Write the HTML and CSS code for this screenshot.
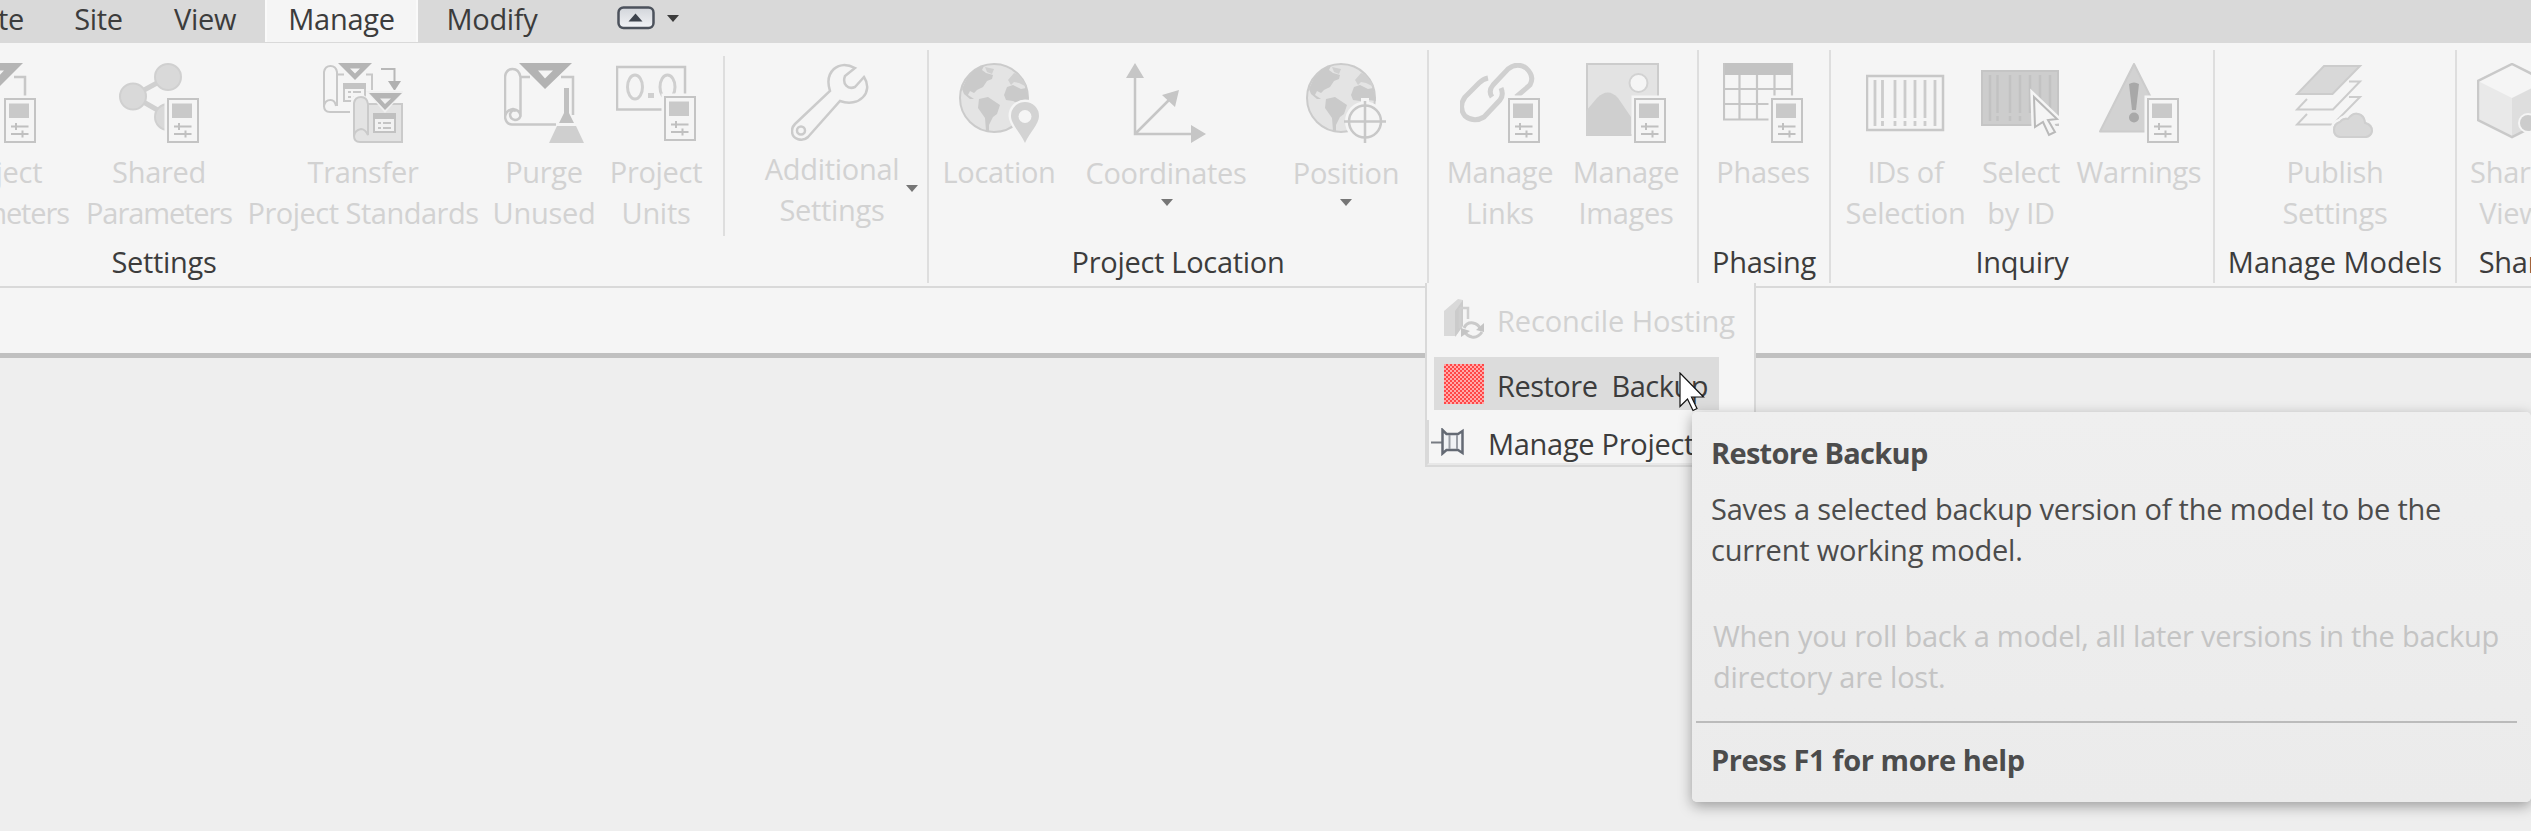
FILE: index.html
```html
<!DOCTYPE html>
<html lang="en">
<head>
    <meta charset="UTF-8">
    <meta name="viewport" content="width=device-width, initial-scale=1.0">
    <title>Manage</title>
    <link rel="stylesheet" href="styles.css">
</head>
<body>
    <!-- shared icon parts -->
    <svg class="defs">
        <symbol id="sheet" viewBox="0 0 80 80">
            <rect x="45.5" y="32.5" width="36" height="49" fill="#f5f5f5"/>
            <rect x="49" y="36" width="30" height="43" fill="#f5f5f5" stroke="#c4c4c4" stroke-width="2"/>
            <rect x="53" y="40.500" width="20" height="14.500" fill="#c9c9c9"/>
            <path d="M55 63.500H72.500M60 60V67M55 71H72.500M66.500 67.500V74.500" stroke="#c0c0c0" stroke-width="2" fill="none"/>
        </symbol>
        <symbol id="globe" viewBox="0 0 80 80">
            <circle cx="35" cy="35" r="34" fill="#e4e4e4" stroke="#cbcbcb" stroke-width="2"/>
            <path d="M3 26L8 15 17 6 25 3 23 7 27 10 34 12 33 16 28 18 24 24 18 27 15 30 11 28 9 32 15 36 11 36 5 31Z" fill="#cacaca"/>
            <path d="M26 4L35 6 33 11 28 9Z" fill="#d0d0d0"/>
            <path d="M20 36L29 34 35 38 41 42 38 51 34 54 30 62 30 69 27 68 26 55 19 45Z" fill="#cacaca"/>
            <path d="M48 24L54 22 62 26 67 25 70 38 62 37 60 41 54 38 47 37 45 32Z" fill="#cacaca"/>
            <path d="M49 17L55 10 59 11 66 20 68 24 60 20 55 19 52 22Z" fill="#d0d0d0"/>
        </symbol>
    </svg>

    <div class="tabs">
        <a class="tab tab-cut">te</a>
        <a class="tab tab-site">Site</a>
        <a class="tab tab-view">View</a>
        <a class="tab tab-manage on">Manage</a>
        <a class="tab tab-modify">Modify</a>
        <svg class="minimize" width="38" height="24" viewBox="0 0 38 24">
            <defs><linearGradient id="mg" x1="0" y1="0" x2="0" y2="1"><stop offset="0" stop-color="#d2d5da"/><stop offset="1" stop-color="#f2f4f7"/></linearGradient></defs>
            <rect x="1.500" y="1.500" width="35" height="20.500" rx="5" fill="url(#mg)" stroke="#4c525c" stroke-width="2.500"/>
            <path d="M18.500 7.500L25.500 15.500H11.500Z" fill="#3d434d"/>
        </svg>
        <i class="arrow arrow-dark"></i>
    </div>

    <div class="ribbon">
        <div class="panel panel-settings">
            <div class="buttons">
                <div class="btn btn-project">
                    <svg class="icon" viewBox="0 0 80 80">
                        <path d="M58 14H69V34M17 14H24M44 61.500H5" fill="none" stroke="#c8c8c8" stroke-width="2.500"/>
                        <path d="M14 0H67L41 26ZM34 7.500H48L41 15Z" fill="#b5b5b5" fill-rule="evenodd"/>
                        <use href="#sheet"/>
                    </svg>
                    <span>Project</span><span class="tight">Parameters</span>
                </div>
                <div class="btn btn-shared">
                    <svg class="icon" viewBox="0 0 80 80">
                        <path d="M49 14L14 33 49 53" fill="none" stroke="#d0d0d0" stroke-width="5"/>
                        <g fill="#d9d9d9" stroke="#d0d0d0" stroke-width="2"><circle cx="49" cy="14" r="13"/><circle cx="14" cy="33.500" r="13"/><circle cx="49" cy="54" r="13"/></g>
                        <use href="#sheet"/>
                    </svg>
                    <span>Shared</span><span class="tight">Parameters</span>
                </div>
                <div class="btn btn-transfer">
                    <svg class="icon" viewBox="0 0 80 80">
                        <g fill="none" stroke="#c8c8c8" stroke-width="2">
                            <path d="M1 44V9Q2 3 7.500 3Q13 3 14 9V43M14 11.500H21M43 11.500H49V27M1 43Q2 37 7.500 37Q12 37 13 43M1 43Q1 49 7 49H27"/>
                            <rect x="21" y="21" width="21" height="17"/>
                        </g>
                        <path d="M20 20H43V26H20Z" fill="#c4c4c4"/>
                        <path d="M25 29H28M30 29H38M25 34H28M30 34H38" stroke="#c8c8c8" stroke-width="2"/>
                        <path d="M15 0H49L32 17ZM27 5.500H37L32 10.500Z" fill="#b5b5b5" fill-rule="evenodd"/>
                        <path d="M58 6H71.500V19" fill="none" stroke="#b8b8b8" stroke-width="2"/>
                        <path d="M65 18H78L71.500 28Z" fill="#b0b0b0"/>
                        <path d="M28 81V38Q30 30 38 30L46 36 45 27H82V81Z" fill="#f5f5f5"/>
                        <path d="M45 41H79V79H37Q31 79 31 73V40Q32 34 38 34Q44 34 45 41Z" fill="#e3e3e3" stroke="#cacaca" stroke-width="2"/>
                        <path d="M45 41V72Q42 66 38 66Q32 67 31 73" fill="none" stroke="#cacaca" stroke-width="2"/>
                        <path d="M43 28H81L62 50Z" fill="#f0f0f0"/>
                        <path d="M46 30H79L62 47ZM57 35.500H68L62 41Z" fill="#b5b5b5" fill-rule="evenodd"/>
                        <rect x="51" y="52" width="21" height="17" fill="#f2f2f2" stroke="#c2c2c2" stroke-width="2"/>
                        <path d="M50 50H73V56H50Z" fill="#c0c0c0"/>
                        <path d="M55 60H58M60 60H68M55 65H58M60 65H68" stroke="#c4c4c4" stroke-width="2"/>
                    </svg>
                    <span>Transfer</span><span class="snug">Project Standards</span>
                </div>
                <div class="btn btn-purge">
                    <svg class="icon" viewBox="0 0 80 80">
                        <path d="M1 55V14Q2 6 8.500 6Q15 6 16.500 14V53M16.500 14H26M57 14H69V52M1 54Q2 47 9 46Q16 47 16.500 53Q15 57 11 57Q6 56 6 51Q8 46 12 48M1 54Q2 61.500 8 61.500H52" fill="none" stroke="#c8c8c8" stroke-width="2.500"/>
                        <path d="M15 0H68L41 26ZM34 7.500H49L41 15.500Z" fill="#b3b3b3" fill-rule="evenodd"/>
                        <path d="M60 25H65V50L70 60H55L60 50Z" fill="#c0c0c0"/>
                        <path d="M53 63H72L80 80H45Z" fill="#cfcfcf"/>
                    </svg>
                    <span>Purge</span><span>Unused</span>
                </div>
                <div class="btn btn-units">
                    <svg class="icon" viewBox="0 0 80 80">
                        <rect x="1" y="4" width="68" height="42.500" fill="none" stroke="#c8c8c8" stroke-width="2.500"/>
                        <g fill="none" stroke="#cfcfcf" stroke-width="3"><ellipse cx="19" cy="24" rx="7.500" ry="12"/><ellipse cx="51.500" cy="24" rx="7.500" ry="12"/></g>
                        <rect x="32" y="30" width="6" height="5" fill="#cfcfcf"/>
                        <use href="#sheet" y="-2"/>
                    </svg>
                    <span>Project</span><span>Units</span>
                </div>
                <div class="divider"></div>
                <div class="btn btn-additional">
                    <svg class="icon" viewBox="0 0 80 80">
                        <path d="M4 61L39 28C33 9 47-4 64 5L54 13C51 21 57 27 64 24L73 14C83 29 68 45 49 38L17 74C12 79 1 77 1 68Q1 64 4 61Z" fill="none" stroke="#cbcbcb" stroke-width="2.500"/>
                        <circle cx="10" cy="67.500" r="4" fill="none" stroke="#cbcbcb" stroke-width="2.500"/>
                    </svg>
                    <span>Additional</span><span>Settings</span>
                </div>
                <i class="arrow arrow-side"></i>
            </div>
            <div class="title">Settings</div>
        </div>

        <div class="panel panel-location">
            <div class="buttons">
                <div class="btn btn-location">
                    <svg class="icon" viewBox="0 0 80 80">
                        <use href="#globe"/>
                        <path d="M66 80C61 69 52 61 52 53A14 14 0 0 1 80 53C80 61 71 69 66 80Z" fill="#d3d3d3" stroke="#f5f5f5" stroke-width="5" paint-order="stroke"/>
                        <circle cx="66" cy="53.500" r="6.500" fill="#f5f5f5"/>
                    </svg>
                    <span>Location</span>
                </div>
                <div class="btn btn-coordinates low">
                    <svg class="icon" viewBox="0 0 80 80">
                        <path d="M9 14V71H66M9 71L44 36" fill="none" stroke="#c6c6c6" stroke-width="2.500"/>
                        <path d="M9 0L18 15H0ZM80 71L65 80V62ZM53 27L49 44 36 32Z" fill="#c6c6c6"/>
                    </svg>
                    <span>Coordinates</span>
                    <i class="arrow"></i>
                </div>
                <div class="btn btn-position low">
                    <svg class="icon" viewBox="0 0 80 80">
                        <use href="#globe"/>
                        <circle cx="59" cy="58.500" r="17" fill="#f5f5f5" stroke="#f5f5f5" stroke-width="6"/>
                        <path d="M59 35V80" stroke="#f5f5f5" stroke-width="8"/>
                        <g fill="none" stroke="#c8c8c8" stroke-width="2.500"><circle cx="59" cy="58.500" r="16"/><path d="M59 38V80M38 58.500H80"/></g>
                    </svg>
                    <span>Position</span>
                    <i class="arrow"></i>
                </div>
            </div>
            <div class="title">Project Location</div>
        </div>

        <div class="panel panel-project">
            <div class="buttons">
                <div class="btn btn-links">
                    <svg class="icon" viewBox="0 0 80 80">
                        <path d="M28 15Q23 16 19 20L5 34Q-2 44 5 53Q14 60 24 54L40 37Q44 32 41 25M32 34Q28 28 33 22L48 6Q57-1 66 5Q75 13 70 22L56 34" fill="none" stroke="#d0d0d0" stroke-width="5"/>
                        <use href="#sheet"/>
                    </svg>
                    <span>Manage</span><span>Links</span>
                </div>
                <div class="btn btn-images">
                    <svg class="icon" viewBox="0 0 80 80">
                        <rect x="1" y="1" width="71" height="71" fill="#e3e3e3" stroke="#cccccc" stroke-width="2"/>
                        <circle cx="52.500" cy="20" r="9" fill="#f5f5f5" stroke="#d2d2d2" stroke-width="2"/>
                        <path d="M0 72.500V48L11 35Q22 24 32 35L45 54V72.500Z" fill="#cfcfcf"/>
                        <use href="#sheet"/>
                    </svg>
                    <span>Manage</span><span>Images</span>
                </div>
            </div>
        </div>

        <div class="panel panel-phasing">
            <div class="buttons">
                <div class="btn btn-phases">
                    <svg class="icon" viewBox="0 0 80 80">
                        <rect width="70" height="12" fill="#c3c3c3"/>
                        <path d="M1 0V57M16.500 12V57M34 12V57M51.500 12V57M69 0V57M0 26H70M0 41H70M0 56.500H70" stroke="#c6c6c6" stroke-width="2.200"/>
                        <use href="#sheet"/>
                    </svg>
                    <span>Phases</span>
                </div>
            </div>
            <div class="title">Phasing</div>
        </div>

        <div class="panel panel-inquiry">
            <div class="buttons">
                <div class="btn btn-ids">
                    <svg class="icon" viewBox="0 0 80 80">
                        <rect x="1" y="13" width="76" height="54" fill="none" stroke="#c8c8c8" stroke-width="2.500"/>
                        <path d="M9 17V63M69 17V63M16.500 17V55M29 17V55M39 17V55M49 17V55M59 17V55M16.500 58V63M29 58V63M39 58V63M49 58V63M59 58V63" stroke="#cccccc" stroke-width="2.800"/>
                    </svg>
                    <span>IDs of</span><span>Selection</span>
                </div>
                <div class="btn btn-select">
                    <svg class="icon" viewBox="0 0 80 80">
                        <rect x="1" y="8" width="76" height="54" fill="#cdcdcd" stroke="#c5c5c5" stroke-width="2"/>
                        <path d="M9 12V58M69 12V58M16.500 12V50M29 12V50M39 12V50M49 12V50M59 12V50M16.500 53V58M29 53V58M39 53V58" stroke="#c2c2c2" stroke-width="2.500"/>
                        <path d="M53 34L77 57 68 58 74 69 68 72 62 60 54 65Z" fill="#f5f5f5" stroke="#f5f5f5" stroke-width="7"/>
                        <path d="M53 34L76 56 67 57 74 69 68 72 62 59 54 64Z" fill="#f5f5f5" stroke="#b9b9b9" stroke-width="2"/>
                    </svg>
                    <span>Select</span><span>by ID</span>
                </div>
                <div class="btn btn-warnings">
                    <svg class="icon" viewBox="0 0 80 80">
                        <path d="M35 1L69 68.500H1Z" fill="#d2d2d2" stroke="#cccccc" stroke-width="2" stroke-linejoin="round"/>
                        <path d="M30 21Q35 18 40 21L37 47H33Z" fill="#a8a8a8"/>
                        <circle cx="35" cy="54.500" r="5" fill="#a8a8a8"/>
                        <use href="#sheet"/>
                    </svg>
                    <span>Warnings</span>
                </div>
            </div>
            <div class="title">Inquiry</div>
        </div>

        <div class="panel panel-models">
            <div class="buttons">
                <div class="btn btn-publish">
                    <svg class="icon" viewBox="0 0 80 80">
                        <path d="M29 3H65L37.500 31H2Z" fill="#d8d8d8" stroke="#cccccc" stroke-width="2"/>
                        <path d="M12 36L2 46.500H38L65 18.500H54M12 51L2 61.500H38L65 34H54" fill="none" stroke="#cccccc" stroke-width="2"/>
                        <path d="M45 75Q38 74 38 67Q38 60 45 58Q48 54 53 55Q57 49 63 50Q70 51 71 59Q78 61 78 68Q77 74 71 75Z" fill="#d8d8d8" stroke="#f5f5f5" stroke-width="5" paint-order="stroke"/>
                        <path d="M45 74Q39 73 39 67Q39 61 45 59Q48 55 53 56Q57 50 63 51Q69 52 70 60Q77 62 77 68Q76 73 71 74Z" fill="none" stroke="#cfcfcf" stroke-width="2"/>
                    </svg>
                    <span>Publish</span><span>Settings</span>
                </div>
            </div>
            <div class="title title-models">Manage Models</div>
        </div>

        <div class="panel panel-share">
            <div class="buttons">
                <div class="btn btn-views">
                    <svg class="icon" viewBox="0 0 80 80">
                        <path d="M1 18L35 35V74L1 57Z" fill="#e9e9e9"/>
                        <path d="M69 18L35 35V74L69 57Z" fill="#dedede"/>
                        <path d="M35 1L69 18V57L35 74 1 57V18Z" fill="none" stroke="#c9c9c9" stroke-width="2.500"/>
                        <circle cx="51" cy="60" r="8" fill="#cccccc" stroke="#f5f5f5" stroke-width="4" paint-order="stroke"/>
                    </svg>
                    <span>Shared</span><span>Views</span>
                </div>
            </div>
            <div class="title">Share</div>
        </div>
    </div>
    <div class="options"></div>

    <!-- expanded part of the Manage Project panel -->
    <div class="menu">
        <div class="item off">
            <svg width="40" height="40" viewBox="0 0 40 40">
                <path d="M0 12L14 0 19 1V26L12 37H0Z" fill="#d9d9d9"/>
                <path d="M11 12L19 1V27L11 38Z" fill="#cbcbcb"/>
                <path d="M16 9H24V20M16 9V28H18" fill="none" stroke="#cfcfcf" stroke-width="2.500"/>
                <path d="M20 29Q23 23 29 24Q34 25 36 29M38 33Q34 39 28 38Q23 37 21 33" fill="none" stroke="#cacaca" stroke-width="3"/>
                <path d="M40 24V33L32 31ZM17 38V29L26 32Z" fill="#c4c4c4"/>
            </svg>
            <span>Reconcile Hosting</span>
        </div>
        <div class="item hover">
            <i class="red"></i>
            <span>Restore&nbsp; Backup</span>
        </div>
        <div class="pinned">
            <svg width="34" height="28" viewBox="0 0 34 28">
                <path d="M0 14.500H11" stroke="#777b82" stroke-width="2"/>
                <path d="M11.500 2V25.500L15.500 22H27L31.500 25V3L27 6H15.500Z" fill="#f0f2f5" stroke="#646a74" stroke-width="2.500"/>
                <path d="M18.500 7V21M26 7V21" stroke="#9a9ea6" stroke-width="2"/>
            </svg>
            <span>Manage Project</span>
        </div>
    </div>

    <div class="tooltip">
        <h3>Restore Backup</h3>
        <p class="text">Saves a selected backup version of the model to be the<br>current working model.</p>
        <p class="note">When you roll back a model, all later versions in the backup<br>directory are lost.</p>
        <hr>
        <h3 class="help">Press F1 for more help</h3>
    </div>

    <svg class="cursor" width="28" height="42" viewBox="0 0 28 42">
        <path d="M1 1V34.500L8.500 27 14 38.500 18 36.500 12.500 25H24.500Z" fill="#fff" stroke="#111" stroke-width="1.200"/>
    </svg>
</body>
</html>
```
FILE: styles.css
```css
*{box-sizing: border-box;}
body,p,h3{margin:0;padding: 0;}
body{
    position: relative;
    width: 2531px;
    height: 831px;
    overflow: hidden;
    background-color: #eeeeee;
    color: #3c3c3c;
    font-family: "Open Sans", "Noto Sans", sans-serif;
    font-size: 29px;
    line-height: 41px;
    letter-spacing: -0.3px;
    white-space: nowrap;
}
.defs{
    position: absolute;
    width: 0;
    height: 0;
}
.tabs{
    display: flex;
    height: 43px;
    background-color: #d9d9d9;
}
.tab{
    height: 42px;
    line-height: 38px;
    text-align: center;
}
.tab.on{
    background-color: #f5f5f5;
    border-left: 2px solid #fafafa;
    border-right: 2px solid #fafafa;
}
.tab-cut{
    width: 46px;
    margin-left: -2px;
    margin-right: 2px;
    text-align: left;
}
.tab-site{width: 105px;}
.tab-view{width: 108px;margin-right: 6px;}
.tab-manage{width: 153px;}
.tab-modify{width: 148px;margin-right: 1px;}
.minimize{
    margin: 6px 12px 0 50px;
}
.arrow{
    flex: none;
    width: 12px;
    height: 7px;
    background-color: #767676;
    clip-path: polygon(0 0, 100% 0, 50% 100%);
}
.arrow-dark{
    margin-top: 15px;
    background-color: #3c3c3c;
}
.ribbon{
    display: flex;
    height: 245px;
    padding-top: 7px;
    background-color: #f5f5f5;
    border-bottom: 2px solid #d9d9d9;
}
.panel{
    display: flex;
    flex: none;
    flex-direction: column;
    height: 233px;
    border-right: 2px solid #dedede;
}
.panel-settings{width: 929px;}
.panel-location{width: 500px;}
.panel-project{width: 270px;padding-left: 8px;}
.panel-phasing{width: 132px;}
.panel-inquiry{width: 384px;}
.panel-models{width: 242px;}
.panel-share{width: 120px;border: 0;}
.buttons{
    display: flex;
    height: 191px;
    padding-top: 13px;
}
.title{
    line-height: 41px;
    text-align: center;
}
.title-models{letter-spacing: 0;}
.panel-settings .title{width: 328px;}
.btn{
    display: flex;
    flex: none;
    flex-direction: column;
    align-items: center;
    color: #d2d2d2;
}
.tight{letter-spacing: -1.1px;}
.snug{letter-spacing: -0.5px;}
.icon{
    width: 80px;
    height: 80px;
    margin-bottom: 8px;
}
.btn-project{width: 160px;margin-left: -84px;margin-right: 1px;}
.btn-shared{width: 164px;}
.btn-transfer{width: 244px;}
.btn-purge{width: 118px;}
.btn-units{width: 106px;}
.btn-additional{width: 140px;margin-left: 36px;}
.btn-additional .icon{margin-bottom: 5px;}
.btn-additional span{margin-left: 2px;}
.btn-location{width: 140px;}
.btn-coordinates{width: 194px;}
.btn-position{width: 166px;}
.low .icon{margin-bottom: 9px;}
.low .arrow{margin-top: 6px;}
.btn-coordinates .arrow{margin-left: 2px;}
.btn-links,.btn-images{width: 126px;}
.btn-phases{width: 128px;}
.btn-ids{width: 149px;}
.btn-select{width: 82px;}
.btn-warnings{width: 140px;margin-left: 7px;}
.btn-publish{width: 240px;}
.btn-views{width: 120px;}
.divider{
    width: 2px;
    height: 180px;
    margin-top: -7px;
    margin-left: 14px;
    background-color: #dedede;
}
.arrow-side{
    margin: 122px 0 0 5px;
}
.options{
    height: 70px;
    background-color: #f5f5f5;
    border-bottom: 5px solid #c0c0c0;
}
.menu{
    position: absolute;
    left: 1425px;
    top: 283px;
    width: 331px;
    height: 184px;
    background-color: #f5f5f5;
    border: 2px solid #d9d9d9;
    border-top: 0;
}
.item{
    display: flex;
    width: 285px;
    height: 53px;
    margin-left: 7px;
    padding: 7px 0 0 10px;
}
.item svg{flex: none;}
.item span{
    margin: 1px 0 0 13px;
}
.off{
    margin-top: 9px;
    margin-bottom: 12px;
    color: #d2d2d2;
    letter-spacing: -0.1px;
}
.hover{
    background-color: #dcdcdc;
}
.hover span{letter-spacing: -0.5px;}
.red{
    flex: none;
    width: 40px;
    height: 40px;
    background: repeating-conic-gradient(#ff4646 0 25%, #ffaaaa 0 50%) 0 0 / 4px 4px;
}
.pinned{
    display: flex;
    height: 45px;
    margin-top: 10px;
    padding: 8px 0 0 2px;
    border-left: 2px solid #d9d9d9;
    border-bottom: 2px solid #e8e8e8;
}
.pinned span{
    margin-top: -5px;
    margin-left: 23px;
}
.tooltip{
    position: absolute;
    left: 1692px;
    top: 412px;
    width: 839px;
    height: 390px;
    padding: 20px 14px 0 4px;
    border-radius: 5px;
    background: linear-gradient(#efefef, #ebebeb);
    box-shadow: 0 4px 14px rgba(0,0,0,.35);
    color: #4c4c4c;
}
.tooltip h3{
    padding-left: 15px;
    font-size: 29px;
    font-weight: 700;
    letter-spacing: -0.7px;
}
.tooltip .help{letter-spacing: -0.4px;}
.tooltip .text{
    margin-top: 15px;
    padding-left: 15px;
    letter-spacing: -0.2px;
}
.tooltip .note{
    margin-top: 45px;
    padding-left: 17px;
    color: #c4c4c4;
    letter-spacing: -0.25px;
}
.tooltip hr{
    height: 2px;
    margin: 24px 0 16px;
    border: 0;
    background-color: #bbbbbb;
}
.cursor{
    position: absolute;
    left: 1679px;
    top: 372px;
}
```
